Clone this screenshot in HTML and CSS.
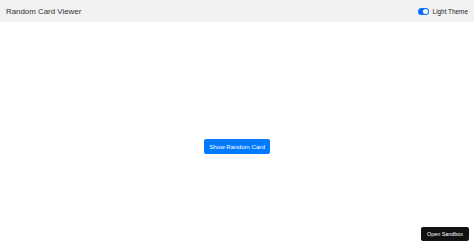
FILE: index.html
```html
<!DOCTYPE html>
<html lang="en">
<head>
    <meta charset="UTF-8">
    <title>Random Card Viewer</title>
    <link rel="stylesheet" href="styles.css">
</head>
<body>
    <header class="topbar">
        <div class="title">Random Card Viewer</div>
        <label class="theme-switch">
            <span class="switch"><span class="knob"></span></span>
            <span class="switch-label">Light Theme</span>
        </label>
    </header>
    <main class="content">
        <button class="show-btn">Show Random Card</button>
    </main>
    <button class="sandbox-btn">Open Sandbox</button>
</body>
</html>
```

FILE: styles.css
```css
html, body {
    margin: 0;
}
body {
    font-family: "Liberation Sans", Arial, sans-serif;
    background-color: #fff;
    color: #333;
}
.topbar {
    height: 22px;
    background-color: #f2f2f2;
    display: flex;
    align-items: center;
    justify-content: space-between;
    padding: 0 6px;
    box-sizing: border-box;
}
.title {
    font-size: 7.9px;
    color: #333;
}
.theme-switch {
    display: flex;
    align-items: center;
    gap: 4px;
}
.switch {
    width: 11px;
    height: 7px;
    border-radius: 4px;
    background-color: #0d6efd;
    display: flex;
    align-items: center;
    justify-content: flex-end;
    padding: 0 1px;
    box-sizing: border-box;
}
.knob {
    width: 5px;
    height: 5px;
    border-radius: 50%;
    background-color: #fff;
}
.switch-label {
    font-size: 6.4px;
    color: #222;
}
/* centred as if the area were a full viewport below the header */
.content {
    height: calc(100vh - 22px);
    padding-top: 22px;
    box-sizing: border-box;
    display: flex;
    align-items: center;
    justify-content: center;
}
.show-btn {
    font-family: inherit;
    font-size: 6.2px;
    color: #fff;
    background-color: #007bff;
    border: none;
    border-radius: 2px;
    width: 66px;
    height: 15px;
    padding: 0;
}
.sandbox-btn {
    position: fixed;
    right: 5px;
    bottom: 7px;
    font-family: inherit;
    font-size: 5.4px;
    color: #fff;
    background-color: #111;
    border: none;
    border-radius: 2px;
    width: 48px;
    height: 14px;
    padding: 0;
}
```
